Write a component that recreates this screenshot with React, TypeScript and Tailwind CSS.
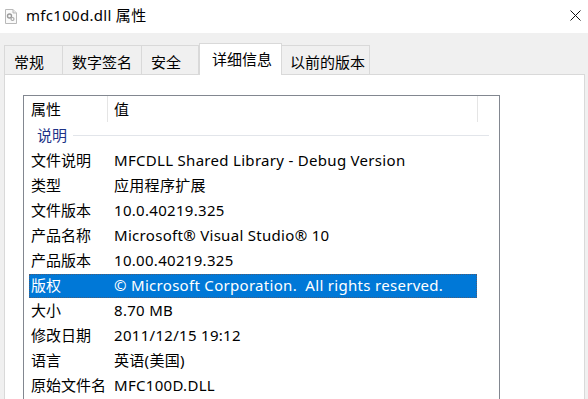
import React from 'react';

type Row = { label: string; value: string };

const rows: Row[] = [
  { label: '文件说明', value: 'MFCDLL Shared Library - Debug Version' },
  { label: '类型', value: '应用程序扩展' },
  { label: '文件版本', value: '10.0.40219.325' },
  { label: '产品名称', value: 'Microsoft® Visual Studio® 10' },
  { label: '产品版本', value: '10.00.40219.325' },
  { label: '版权', value: '© Microsoft Corporation.  All rights reserved.' },
  { label: '大小', value: '8.70 MB' },
  { label: '修改日期', value: '2011/12/15 19:12' },
  { label: '语言', value: '英语(美国)' },
  { label: '原始文件名', value: 'MFC100D.DLL' },
];

const tabs = [
  { name: '常规', w: 'w-[59px]', pl: 'pl-[9px]' },
  { name: '数字签名', w: 'w-[79px]', pl: 'pl-[9px]' },
  { name: '安全', w: 'w-[57px]', pl: 'pl-[9px]' },
  { name: '详细信息', w: 'w-[83px]', pl: 'pl-[12px]', active: true },
  { name: '以前的版本', w: 'w-[88px]', pl: 'pl-[8px]' },
];

// dll 文件图标
const DllIcon = () => (
  <svg width="12" height="15" viewBox="0 0 12 15">
    <path d="M0.5 0.5 H8 L11.5 4 V14.5 H0.5 Z" fill="#fafafa" stroke="#b9b9b9" />
    <path d="M8 0.5 V4 H11.5" fill="#e6e6e6" stroke="#b9b9b9" />
    <circle cx="4.5" cy="7" r="2" fill="none" stroke="#9a9a9a" strokeWidth="1.4" />
    <circle cx="7.5" cy="10" r="1.5" fill="none" stroke="#a8a8a8" strokeWidth="1.2" />
  </svg>
);

export default function App() {
  return (
    <div
      className="w-[588px] h-[399px] overflow-hidden bg-[#f0f0f0] text-black text-[15px] leading-none flex flex-col"
      style={{ fontFamily: '"Noto Sans", "Noto Sans CJK SC", sans-serif' }}
    >
      {/* 标题栏 */}
      <div className="h-[33px] bg-white flex items-center shrink-0">
        <div className="pl-[5px] w-[26px] flex">
          <DllIcon />
        </div>
        <span className="text-[15px] pb-[2px] tracking-[0.3px]">mfc100d.dll 属性</span>
        <div className="ml-auto mr-[7px] pb-[2px]">
          <svg width="11" height="11" viewBox="0 0 11 11">
            <path d="M0.5 0.5 L10.5 10.5 M10.5 0.5 L0.5 10.5" stroke="#111" strokeWidth="1" />
          </svg>
        </div>
      </div>

      {/* 选项卡 */}
      <div className="flex items-end pl-[4px] pt-[10px] shrink-0">
        {tabs.map((t, i) => (
          <div
            key={t.name}
            className={
              t.active
                ? `${t.w} ${t.pl} h-[32px] bg-white border border-b-0 border-[#d9d9d9] relative z-10 -mb-px pt-[8px]`
                : `${t.w} ${t.pl} h-[29px] border-t border-r border-[#d9d9d9] ${i === 0 ? 'border-l' : ''} pt-[9px]`
            }
          >
            {t.name}
          </div>
        ))}
      </div>

      {/* 面板 */}
      <div className="ml-[4px] w-[581px] flex-1 bg-white border border-[#d9d9d9] pl-[18px] pt-[20px]">
        <div className="w-[477px] h-[400px] border border-[#828790] bg-white">
          {/* 表头 */}
          <div className="h-[27px] flex">
            <div className="w-[83px] pl-[7px] flex items-center pb-[1px]">属性</div>
            <div className="w-px h-[26px] bg-[#e5e5e5]" />
            <div className="w-[369px] pl-[6px] flex items-center pb-[1px]">值</div>
            <div className="w-px h-[26px] bg-[#e5e5e5]" />
          </div>

          {/* 分组 */}
          <div className="h-[26px] flex items-center pl-[13px] pr-[10px] pb-[2px]">
            <span className="text-[#1e3287]">说明</span>
            <div className="flex-1 h-px bg-[#e2e5ea] ml-[6px]" />
          </div>

          {/* 行 */}
          {rows.map((r) => {
            const selected = r.label === '版权';
            return (
              <div
                key={r.label}
                className={
                  selected
                    ? 'ml-[5px] w-[448px] h-[24px] mb-px flex items-center pb-[1px] bg-[#0078d7] text-white outline outline-1 outline-dotted outline-[#4a5d78] -outline-offset-1'
                    : 'ml-[5px] w-[448px] h-[24px] mb-px flex items-center pb-[1px]'
                }
              >
                <div className="w-[83px] pl-[2px] whitespace-nowrap">{r.label}</div>
                <div className="pl-[2px] whitespace-pre tracking-[0.3px]">{r.value}</div>
              </div>
            );
          })}
        </div>
      </div>
    </div>
  );
}
